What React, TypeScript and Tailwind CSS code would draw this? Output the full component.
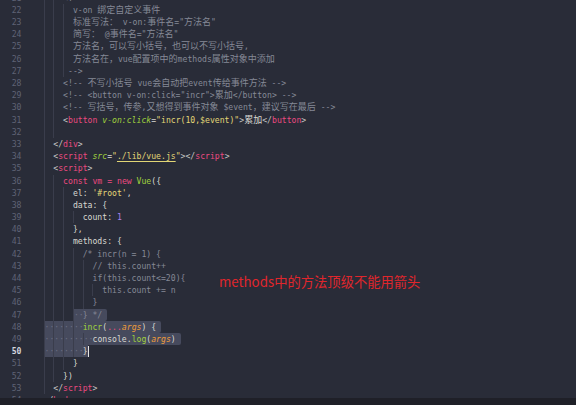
import React from "react";

type Tok = [string, string];
type Line = { n: number; ind: number; toks: Tok[]; sel?: { from: number; eol: boolean }; cursor?: boolean };

const C: Record<string, string> = {
  c: "text-[#858996]",
  p: "text-[#d8d8d2]",
  g: "text-[#c4c4c4]",
  t: "text-[#ec4a80]",
  a: "text-[#a0d23e] italic",
  s: "text-[#e2d676]",
  u: "text-[#e2d676] underline decoration-[#e2d676] underline-offset-2",
  f: "text-[#a0d23e]",
  n: "text-[#aa82ee]",
  o: "text-[#ef9c3a] italic",
};

const lines: Line[] = [
  { n: 21, ind: 4, toks: [["c", "<!--"]] },
  { n: 22, ind: 6, toks: [["c", "v-on 绑定自定义事件"]] },
  { n: 23, ind: 6, toks: [["c", '标准写法： v-on:事件名="方法名"']] },
  { n: 24, ind: 6, toks: [["c", '简写： @事件名="方法名"']] },
  { n: 25, ind: 6, toks: [["c", "方法名，可以写小括号，也可以不写小括号,"]] },
  { n: 26, ind: 6, toks: [["c", "方法名在，vue配置项中的methods属性对象中添加"]] },
  { n: 27, ind: 5, toks: [["c", "-->"]] },
  { n: 28, ind: 4, toks: [["c", "<!-- 不写小括号 vue会自动把event传给事件方法 -->"]] },
  { n: 29, ind: 4, toks: [["c", '<!-- <button v-on:click="incr">累加</button> -->']] },
  { n: 30, ind: 4, toks: [["c", "<!-- 写括号，传参,又想得到事件对象 $event，建议写在最后 -->"]] },
  {
    n: 31,
    ind: 4,
    toks: [["g", "<"], ["t", "button"], ["p", " "], ["a", "v-on:click"], ["p", "="], ["s", '"incr(10,$event)"'], ["g", ">"], ["p", "累加"], ["g", "</"], ["t", "button"], ["g", ">"]],
  },
  { n: 32, ind: 4, toks: [] },
  { n: 33, ind: 2, toks: [["g", "</"], ["t", "div"], ["g", ">"]] },
  {
    n: 34,
    ind: 2,
    toks: [["g", "<"], ["t", "script"], ["p", " "], ["a", "src"], ["p", "="], ["s", '"'], ["u", "./lib/vue.js"], ["s", '"'], ["g", "></"], ["t", "script"], ["g", ">"]],
  },
  { n: 35, ind: 2, toks: [["g", "<"], ["t", "script"], ["g", ">"]] },
  { n: 36, ind: 4, toks: [["t", "const"], ["p", " "], ["t", "vm"], ["p", " "], ["t", "="], ["p", " "], ["t", "new"], ["p", " "], ["f", "Vue"], ["p", "({"]] },
  { n: 37, ind: 6, toks: [["p", "el: "], ["s", "'#root'"], ["p", ","]] },
  { n: 38, ind: 6, toks: [["p", "data: {"]] },
  { n: 39, ind: 8, toks: [["p", "count: "], ["n", "1"]] },
  { n: 40, ind: 6, toks: [["p", "},"]] },
  { n: 41, ind: 6, toks: [["p", "methods: {"]] },
  { n: 42, ind: 8, toks: [["c", "/* incr(n = 1) {"]] },
  { n: 43, ind: 10, toks: [["c", "// this.count++"]] },
  { n: 44, ind: 10, toks: [["c", "if(this.count<=20){"]] },
  { n: 45, ind: 12, toks: [["c", "this.count += n"]] },
  { n: 46, ind: 10, toks: [["c", "}"]] },
  { n: 47, ind: 8, toks: [["c", "} */"]], sel: { from: 6, eol: true } },
  { n: 48, ind: 8, toks: [["f", "incr"], ["p", "("], ["t", "..."], ["o", "args"], ["p", ") {"]], sel: { from: 0, eol: true } },
  { n: 49, ind: 10, toks: [["p", "console."], ["f", "log"], ["p", "("], ["o", "args"], ["p", ")"]], sel: { from: 0, eol: true } },
  { n: 50, ind: 8, toks: [["p", "}"]], sel: { from: 0, eol: false }, cursor: true },
  { n: 51, ind: 6, toks: [["p", "}"]] },
  { n: 52, ind: 4, toks: [["p", "})"]] },
  { n: 53, ind: 2, toks: [["g", "</"], ["t", "script"], ["g", ">"]] },
  { n: 54, ind: 0, toks: [["g", "</"], ["t", "body"], ["g", ">"]] },
];

// wider glyphs for the Chinese runs, like the editor's fallback font
const cjk = /([\u3000-\u303f\u4e00-\u9fff\uff00-\uffef]+)/;

function Text({ s }: { s: string }) {
  return (
    <>
      {s.split(cjk).map((part, i) =>
        i % 2 === 1 ? (
          <span key={i} className="text-[9px]">
            {part}
          </span>
        ) : (
          part
        )
      )}
    </>
  );
}

function CodeLine({ line }: { line: Line }) {
  const chunks: number[] = [];
  for (let c = 0; c < line.ind; c += 2) chunks.push(c);
  const sel = line.sel;

  return (
    <div className="flex h-[12.2px]">
      <div
        className={`w-[43.5px] shrink-0 pr-[22px] text-right ${
          line.cursor ? "text-[#d2d5de] font-bold" : "text-[#5f6375]"
        }`}
      >
        {line.n}
      </div>
      <div className="flex items-stretch whitespace-pre">
        {chunks.map((c) => {
          const w = line.ind - c >= 2 ? "w-[9.8px]" : "w-[4.9px]";
          const on = sel && c >= sel.from;
          return (
            <span
              key={c}
              className={`inline-block ${w} border-l border-[#3a3d4c] overflow-hidden ${
                on ? "bg-[#464a5d] text-[#6a6f83]" : ""
              }`}
            >
              {on ? (line.ind - c >= 2 ? "··" : "·") : ""}
            </span>
          );
        })}
        <span className={sel ? "bg-[#464a5d]" : ""}>
          {line.toks.map(([k, s], i) => (
            <span key={i} className={C[k]}>
              <Text s={s} />
            </span>
          ))}
        </span>
        {sel && sel.eol && <span className="inline-block w-[4.9px] bg-[#464a5d] rounded-r-[2px]" />}
        {line.cursor && <span className="inline-block w-px h-[11px] mt-[1px] bg-[#e6e6e6] -mr-px" />}
      </div>
    </div>
  );
}

export default function App() {
  return (
    <div className="relative flex h-[405px] w-[576px] flex-col overflow-hidden bg-[#292c38] font-['DejaVu_Sans_Mono','Noto_Sans_CJK_SC',monospace] text-[8.15px] leading-[12.2px]">
      <div className="flex-1 overflow-hidden">
        <div className="mt-[-8.3px]">
          {lines.map((l) => (
            <CodeLine key={l.n} line={l} />
          ))}
        </div>
      </div>
      <div className="h-[7px] shrink-0 bg-[#1f2028]" />
      <div className="absolute left-[219px] top-[273px] font-['Noto_Sans_CJK_SC','Noto_Sans',sans-serif] text-[13.3px] leading-[17px] text-[#e0262c]">
        methods中的方法顶级不能用箭头
      </div>
    </div>
  );
}
